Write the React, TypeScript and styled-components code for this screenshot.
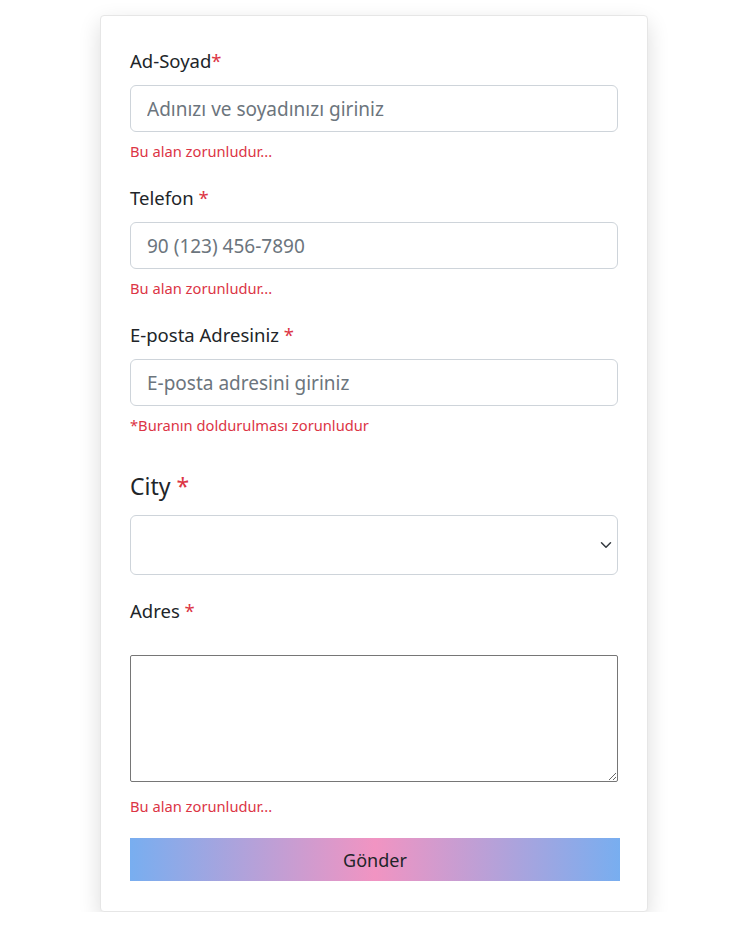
import styled, { createGlobalStyle } from "styled-components";

const GlobalStyle = createGlobalStyle`
  body {
    margin: 0;
    background: #ffffff;
    font-family: "Noto Sans", "Open Sans", sans-serif;
    color: #212529;
  }
`;

const Card = styled.form`
  width: 548px;
  box-sizing: border-box;
  margin: 15px 0 0 100px;
  padding: 32px 29px 30px;
  background: #ffffff;
  border: 1px solid #e6e6e6;
  border-radius: 4px;
  box-shadow: 0 8px 22px rgba(0, 0, 0, 0.14);
`;

const Field = styled.div<{ gap?: number }>`
  display: flex;
  flex-direction: column;
  margin-bottom: ${(p) => p.gap ?? 24}px;
`;

const Label = styled.label<{ big?: boolean }>`
  font-size: ${(p) => (p.big ? 23 : 18.5)}px;
  line-height: ${(p) => (p.big ? 30 : 26)}px;
  margin-bottom: ${(p) => (p.big ? 14 : 11)}px;
`;

const Star = styled.span`
  color: #dc3545;
`;

const Input = styled.input`
  height: 47px;
  box-sizing: border-box;
  padding: 0 16px;
  font-family: inherit;
  font-size: 19px;
  color: #212529;
  border: 1px solid #ced4da;
  border-radius: 6px;
  outline: none;

  &::placeholder {
    color: #6c757d;
  }
`;

const Error = styled.div<{ offset?: number }>`
  margin-top: ${(p) => p.offset ?? 9}px;
  font-size: 14.7px;
  line-height: 20px;
  color: #dc3545;
`;

const SelectWrap = styled.div`
  position: relative;
`;

const Select = styled.select`
  width: 100%;
  height: 60px;
  box-sizing: border-box;
  padding: 0 40px 0 16px;
  font-family: inherit;
  font-size: 19px;
  background: #ffffff;
  border: 1px solid #ced4da;
  border-radius: 6px;
  appearance: none;
  outline: none;
`;

const Chevron = styled.svg`
  position: absolute;
  right: 5px;
  top: 24px;
  pointer-events: none;
`;

const TextArea = styled.textarea`
  height: 127px;
  margin-top: 20px;
  box-sizing: border-box;
  font-family: inherit;
  border: 1px solid #767676;
  border-radius: 2px;
  outline: none;
`;

const Submit = styled.button`
  width: calc(100% + 2px);
  height: 43px;
  border: none;
  border-radius: 0;
  font-family: inherit;
  font-size: 18px;
  color: #212529;
  background: linear-gradient(to right, #78aef0 0%, #f194c2 50%, #78aef0 100%);
  cursor: pointer;
`;

const App = () => {
  return (
    <>
      <GlobalStyle />
      <Card onSubmit={(e) => e.preventDefault()}>
        <Field>
          <Label>
            Ad-Soyad<Star>*</Star>
          </Label>
          <Input placeholder="Adınızı ve soyadınızı giriniz" />
          <Error>Bu alan zorunludur...</Error>
        </Field>
        <Field>
          <Label>
            Telefon <Star>*</Star>
          </Label>
          <Input placeholder="90 (123) 456-7890" />
          <Error>Bu alan zorunludur...</Error>
        </Field>
        <Field gap={36}>
          <Label>
            E-posta Adresiniz <Star>*</Star>
          </Label>
          <Input placeholder="E-posta adresini giriniz" />
          <Error>*Buranın doldurulması zorunludur</Error>
        </Field>
        <Field gap={23}>
          <Label big>
            City <Star>*</Star>
          </Label>
          <SelectWrap>
            <Select defaultValue="">
              <option value=""></option>
            </Select>
            <Chevron width="14" height="12" viewBox="0 0 16 16">
              <path
                d="M2 5l6 6 6-6"
                fill="none"
                stroke="#343a40"
                strokeWidth="2"
                strokeLinecap="round"
                strokeLinejoin="round"
              />
            </Chevron>
          </SelectWrap>
        </Field>
        <Field gap={22}>
          <Label>
            Adres <Star>*</Star>
          </Label>
          <TextArea />
          <Error offset={14}>Bu alan zorunludur...</Error>
        </Field>
        <Submit type="submit">Gönder</Submit>
      </Card>
    </>
  );
};

export default App;
